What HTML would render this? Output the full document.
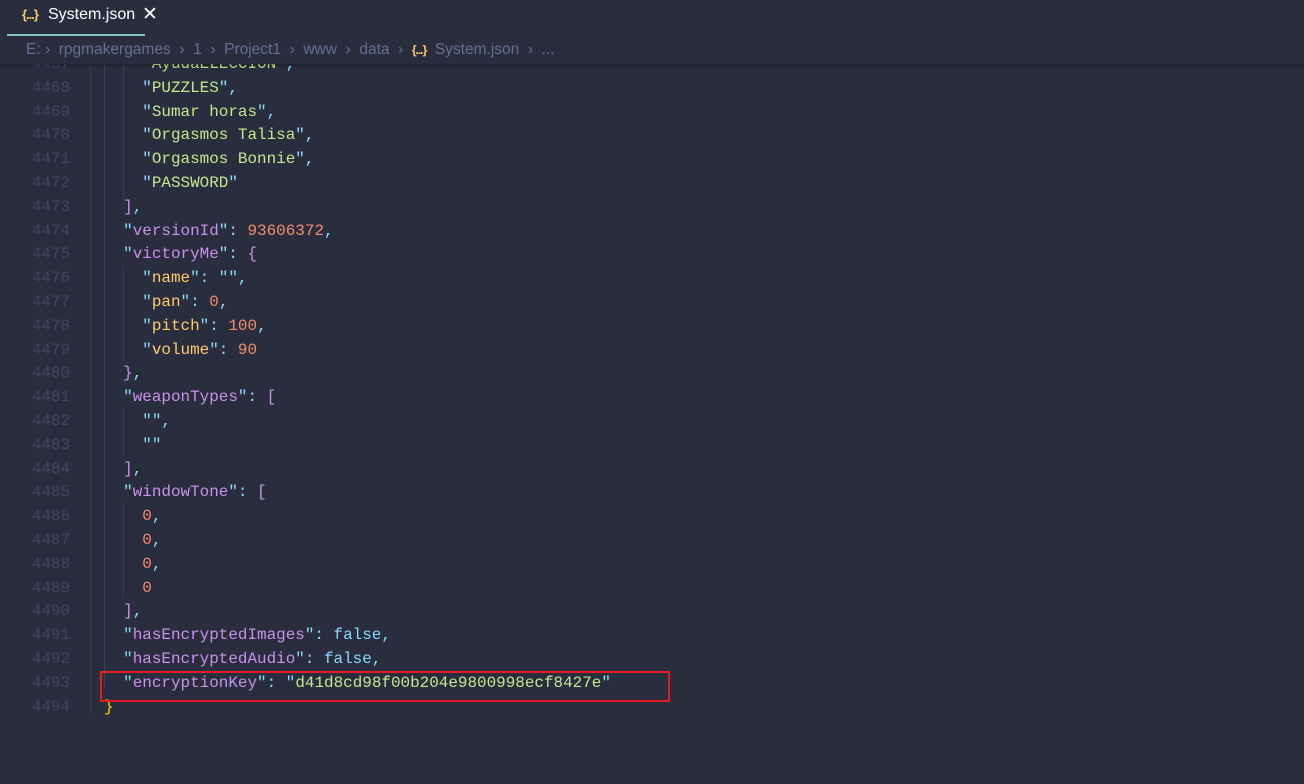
<!DOCTYPE html>
<html><head><meta charset="utf-8"><style>
body{margin:0;width:1304px;height:784px;background:#292d3e;overflow:hidden;position:relative;font-family:"Liberation Sans",sans-serif}
.tab{position:absolute;left:7px;top:0;width:138px;height:34px;border-bottom:2px solid #80cbc4;}
.tab .ic{position:absolute;left:15px;top:7px;color:#ffcb6b;font-size:13px;font-weight:bold;letter-spacing:-1px}
.tab .nm{position:absolute;left:41px;top:6px;color:#fff;font-size:16px}
.tab .x{position:absolute;left:135px;top:3px;color:#fff;font-size:19px}
.bc{position:absolute;left:26px;top:41px;color:#676e95;font-size:15.5px;white-space:pre;z-index:3}
.bc i{font-style:normal;color:#ffcb6b;font-size:12px;font-weight:bold;letter-spacing:-1px}
.bcbg{position:absolute;left:0;top:36px;width:1304px;height:28px;background:#292d3e;z-index:2;box-shadow:0 2px 3px rgba(0,0,0,.25)}
.nums{position:absolute;left:0;top:53px;width:70px;text-align:right;font-family:"Liberation Mono",monospace;font-size:15.9px;line-height:23.8px;color:#41465f}
.code{position:absolute;left:104px;top:53px;font-family:"Liberation Mono",monospace;font-size:15.95px;line-height:23.8px;white-space:pre;color:#89ddff}
.nums div,.code div{height:23.8px}
.g{position:absolute;width:1px;background:#3a3f58}
.k{color:#c792ea}.y{color:#ffcb6b}.s{color:#c3e88d}.n{color:#f78c6c}.p{color:#c792ea}.b{color:#ffd700}
.box{position:absolute;left:100px;top:671px;width:570px;height:31px;border:2px solid #e51b24;box-sizing:border-box}
</style></head><body>
<div class="tab"><span class="ic">{...}</span><span class="nm">System.json</span><span class="x">✕</span></div>
<div class="g" style="left:90px;top:64px;height:650px;background:#34384d"></div>
<div class="g" style="left:104px;top:64px;height:623px"></div>
<div class="g" style="left:123px;top:64px;height:142px"></div>
<div class="g" style="left:123px;top:266px;height:95px"></div>
<div class="g" style="left:123px;top:408px;height:48px"></div>
<div class="g" style="left:123px;top:503px;height:95px"></div>
<div class="nums"><div>4467</div><div>4468</div><div>4469</div><div>4470</div><div>4471</div><div>4472</div><div>4473</div><div>4474</div><div>4475</div><div>4476</div><div>4477</div><div>4478</div><div>4479</div><div>4480</div><div>4481</div><div>4482</div><div>4483</div><div>4484</div><div>4485</div><div>4486</div><div>4487</div><div>4488</div><div>4489</div><div>4490</div><div>4491</div><div>4492</div><div>4493</div><div>4494</div></div>
<div class="code"><div>    "<span class="s">AyudaELECCION</span>",</div><div>    "<span class="s">PUZZLES</span>",</div><div>    "<span class="s">Sumar horas</span>",</div><div>    "<span class="s">Orgasmos Talisa</span>",</div><div>    "<span class="s">Orgasmos Bonnie</span>",</div><div>    "<span class="s">PASSWORD</span>"</div><div>  <span class="p">]</span>,</div><div>  "<span class="k">versionId</span>": <span class="n">93606372</span>,</div><div>  "<span class="k">victoryMe</span>": <span class="p">{</span></div><div>    "<span class="y">name</span>": "",</div><div>    "<span class="y">pan</span>": <span class="n">0</span>,</div><div>    "<span class="y">pitch</span>": <span class="n">100</span>,</div><div>    "<span class="y">volume</span>": <span class="n">90</span></div><div>  <span class="p">}</span>,</div><div>  "<span class="k">weaponTypes</span>": <span class="p">[</span></div><div>    "",</div><div>    ""</div><div>  <span class="p">]</span>,</div><div>  "<span class="k">windowTone</span>": <span class="p">[</span></div><div>    <span class="n">0</span>,</div><div>    <span class="n">0</span>,</div><div>    <span class="n">0</span>,</div><div>    <span class="n">0</span></div><div>  <span class="p">]</span>,</div><div>  "<span class="k">hasEncryptedImages</span>": false,</div><div>  "<span class="k">hasEncryptedAudio</span>": false,</div><div>  "<span class="k">encryptionKey</span>": "<span class="s">d41d8cd98f00b204e9800998ecf8427e</span>"</div><div><span class="b">}</span></div></div>
<div class="bcbg"></div>
<div class="bc">E: ›  rpgmakergames  ›  1  ›  Project1  ›  www  ›  data  ›  <i>{...}</i>  System.json  ›  ...</div>
<div class="box"></div>
</body></html>
